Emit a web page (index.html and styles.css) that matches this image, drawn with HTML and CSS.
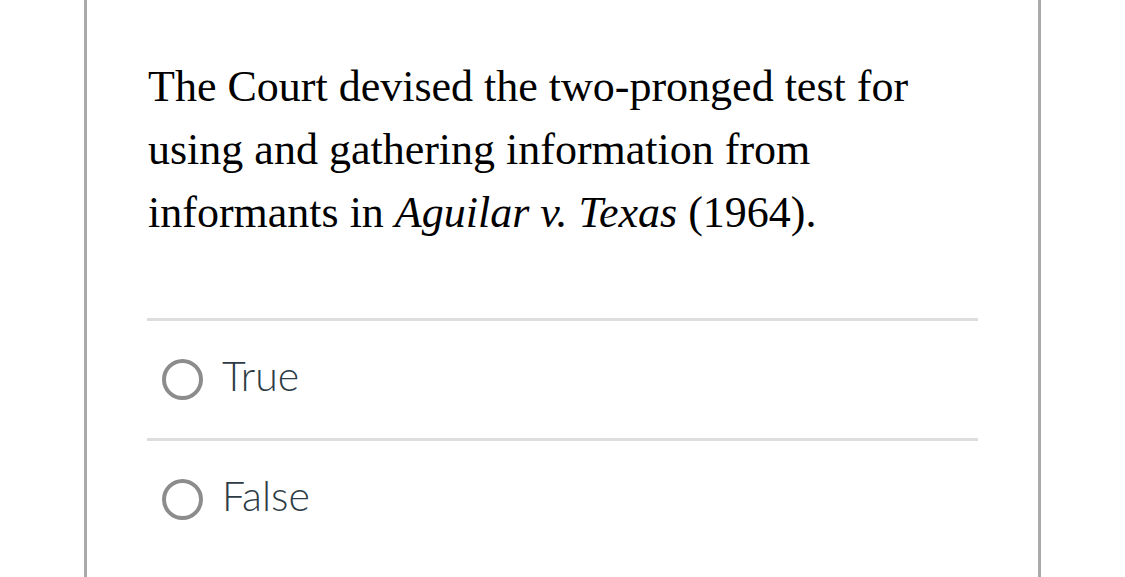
FILE: index.html
```html
<!DOCTYPE html>
<html>
<head>
<meta charset="utf-8">
<link rel="stylesheet" href="styles.css">
</head>
<body>
<div class="card">
  <p class="question">The Court devised the two-pronged test for using and gathering information from informants in <em>Aguilar v. Texas</em> (1964).</p>
  <div class="answers">
    <label class="answer"><span class="radio"></span><span class="label">True</span></label>
    <label class="answer"><span class="radio"></span><span class="label">False</span></label>
  </div>
</div>
</body>
</html>
```
FILE: styles.css
```css
html, body {
  margin: 0;
  padding: 0;
  background: #fff;
  height: 100%;
  overflow: hidden;
}
.card {
  box-sizing: border-box;
  margin-left: 84px;
  width: 957px;
  height: 100%;
  border-left: 3px solid #aaa;
  border-right: 3px solid #aaa;
  padding: 55px 60px 0 61px;
}
.question {
  margin: 0;
  font-family: "Liberation Serif", "Times New Roman", serif;
  font-size: 44px;
  line-height: 63px;
  color: #000;
  width: 780px;
}
.question em {
  font-style: italic;
}
.answers {
  margin-top: 74px;
  margin-left: -1px;
}
.answer {
  display: flex;
  align-items: center;
  height: 117px;
  border-top: 3px solid #ddd;
  gap: 19px;
  padding-left: 15px;
}
.radio {
  width: 33px;
  height: 33px;
  border: 4px solid #8c8c8c;
  border-radius: 50%;
  flex: none;
}
.label {
  font-family: Lato, "Open Sans", sans-serif;
  font-weight: 300;
  font-size: 41px;
  color: #2d3b45;
  padding-bottom: 9px;
}
```
